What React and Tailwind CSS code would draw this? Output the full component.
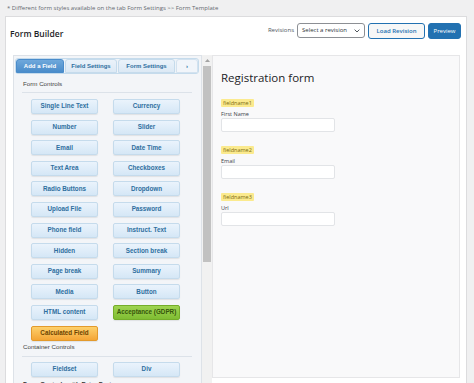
import React from "react";

const left = [
  "Single Line Text", "Currency",
  "Number", "Slider",
  "Email", "Date Time",
  "Text Area", "Checkboxes",
  "Radio Buttons", "Dropdown",
  "Upload File", "Password",
  "Phone field", "Instruct. Text",
  "Hidden", "Section break",
  "Page break", "Summary",
  "Media", "Button",
  "HTML content", "Acceptance (GDPR)",
  "Calculated Field",
];

function CtlButton({ label }) {
  let cls =
    "bg-gradient-to-b from-[#eaf3fc] to-[#d5e7f6] border-[#c5dbec] text-[#2e6e9e]";
  if (label === "Acceptance (GDPR)")
    cls = "bg-gradient-to-b from-[#9fd451] to-[#7fbd32] border-[#74ad2a] text-[#35560b]";
  if (label === "Calculated Field")
    cls = "bg-gradient-to-b from-[#fdd06a] to-[#f4a534] border-[#e39a2c] text-[#6b4300]";
  return (
    <div
      className={`h-[15px] border rounded-[2px] flex items-center justify-center font-bold text-[6.3px] leading-none whitespace-nowrap shadow-[0_1px_1px_rgba(0,0,0,0.08)] ${cls}`}
    >
      {label}
    </div>
  );
}

function Field({ name, label, first }) {
  return (
    <div className={`flex flex-col items-start ${first ? "mt-[13px]" : "mt-[14px]"}`}>
      <div className="h-[8px] px-[2px] bg-[#fbea8e] rounded-[1px] text-[5.5px] leading-[8px] text-[#7d6a12]">
        {name}
      </div>
      <div className="mt-[4px] h-[7px] text-[5.5px] leading-[7px] text-[#3c434a]">{label}</div>
      <div className="w-[114px] h-[14px] bg-white border border-[#e2e4e7] rounded-[2px]" />
    </div>
  );
}

export default function App() {
  return (
    <div className="w-[474px] h-[383px] overflow-hidden bg-[#f0f0f1] font-['Open_Sans',sans-serif]">
      <div className="h-[16px] pl-[7px] pt-[4px] text-[6px] leading-[9px] text-[#646970] whitespace-nowrap">
        * Different form styles available on the tab Form Settings &gt;&gt; Form Template
      </div>
      <div className="ml-[5px] mr-[7px] h-[420px] bg-white border border-[#dcdcde]">
        <div className="h-[38px] flex justify-between">
          <div className="pl-[4px] pt-[12px] text-[8.5px] leading-[10px] font-semibold text-[#1d2327]">
            Form Builder
          </div>
          <div className="pt-[6px] pr-[5px] flex items-start gap-[3px]">
            <div className="h-[15px] flex items-center text-[6px] text-[#50575e]">Revisions</div>
            <div className="w-[68px] h-[15px] border border-[#8c8f94] rounded-[3px] bg-white flex items-center justify-between pl-[4px] pr-[4px] text-[6px] text-[#2c3338]">
              <span>Select a revision</span>
              <svg width="6" height="4" viewBox="0 0 6 4">
                <path d="M0.6 0.6 L3 3 L5.4 0.6" fill="none" stroke="#50575e" strokeWidth="1" />
              </svg>
            </div>
            <div className="w-[57px] h-[16px] border border-[#2271b1] rounded-[3px] bg-[#f6f7f7] flex items-center justify-center text-[6px] font-semibold text-[#2271b1]">
              Load Revision
            </div>
            <div className="w-[33px] h-[16px] border border-[#2271b1] rounded-[3px] bg-[#2271b1] flex items-center justify-center text-[6px] text-white">
              Preview
            </div>
          </div>
        </div>
        <div className="flex pl-[7px] pr-[6px]">
          <div className="w-[189px] h-[360px] bg-[#f3f5f8] border border-[#dde2e8] font-['Liberation_Sans',sans-serif]">
            <div className="ml-[1px] mt-[2px] w-[184px] h-[16px] bg-[#eef3f8] border border-[#c5dbec] rounded-[3px] flex items-stretch gap-[1px] p-[0px]">
              <div className="w-[48px] bg-gradient-to-b from-[#6fa8db] to-[#4a8cca] border border-[#4a8ccb] rounded-t-[3px] flex items-center justify-center text-[6px] font-bold text-white">
                Add a Field
              </div>
              <div className="w-[52px] bg-gradient-to-b from-[#eaf2fa] to-[#dce9f5] border border-[#c5dbec] rounded-t-[3px] flex items-center justify-center text-[6px] font-bold text-[#2e6e9e]">
                Field Settings
              </div>
              <div className="w-[57px] bg-gradient-to-b from-[#eaf2fa] to-[#dce9f5] border border-[#c5dbec] rounded-t-[3px] flex items-center justify-center text-[6px] font-bold text-[#2e6e9e]">
                Form Settings
              </div>
              <div className="w-[22px] bg-[#f1f5fa] border border-[#d3e2ef] rounded-t-[3px] flex items-center justify-center text-[6px] font-bold text-[#2e6e9e]">
                ›
              </div>
            </div>
            <div className="mt-[5px] pl-[9px] h-[10px] text-[6.2px] leading-[10px] text-[#444]">Form Controls</div>
            <div className="mt-[3px] ml-[8px] mr-[9px] h-px bg-[#dce2e9]" />
            <div className="mt-[6px] pl-[17px] grid grid-cols-[67px_67px] gap-x-[15px] gap-y-[5.6px]">
              {left.map((l) => (
                <CtlButton key={l} label={l} />
              ))}
            </div>
            <div className="mt-[1.5px] pl-[9px] h-[10px] text-[6.2px] leading-[10px] text-[#444]">Container Controls</div>
            <div className="mt-[4px] ml-[8px] mr-[9px] h-px bg-[#dce2e9]" />
            <div className="mt-[5px] pl-[17px] grid grid-cols-[67px_67px] gap-x-[15px]">
              <CtlButton label="Fieldset" />
              <CtlButton label="Div" />
            </div>
            <div className="mt-[2px] pl-[9px] text-[6.2px] leading-[10px] font-bold text-[#333]">
              Form Controls with Extra Features
            </div>
          </div>
          <div className="w-[10px] h-[360px] bg-[#f1f1f1] flex flex-col items-center">
            <div className="h-[11px] w-full flex items-center justify-center">
              <svg width="5" height="3" viewBox="0 0 5 3">
                <path d="M0 3 L2.5 0 L5 3 Z" fill="#a3a3a3" />
              </svg>
            </div>
            <div className="w-[8px] h-[196px] bg-[#c1c1c1]" />
          </div>
          <div className="w-[248px] h-[323px] bg-[#f9f9fa] border border-[#e6e6e8] pl-[8px] pt-[14px]">
            <div className="text-[11.5px] leading-[16px] text-[#1d2327]">Registration form</div>
            <Field name="fieldname1" label="First Name" first />
            <Field name="fieldname2" label="Email" />
            <Field name="fieldname3" label="Url" />
          </div>
        </div>
      </div>
    </div>
  );
}
